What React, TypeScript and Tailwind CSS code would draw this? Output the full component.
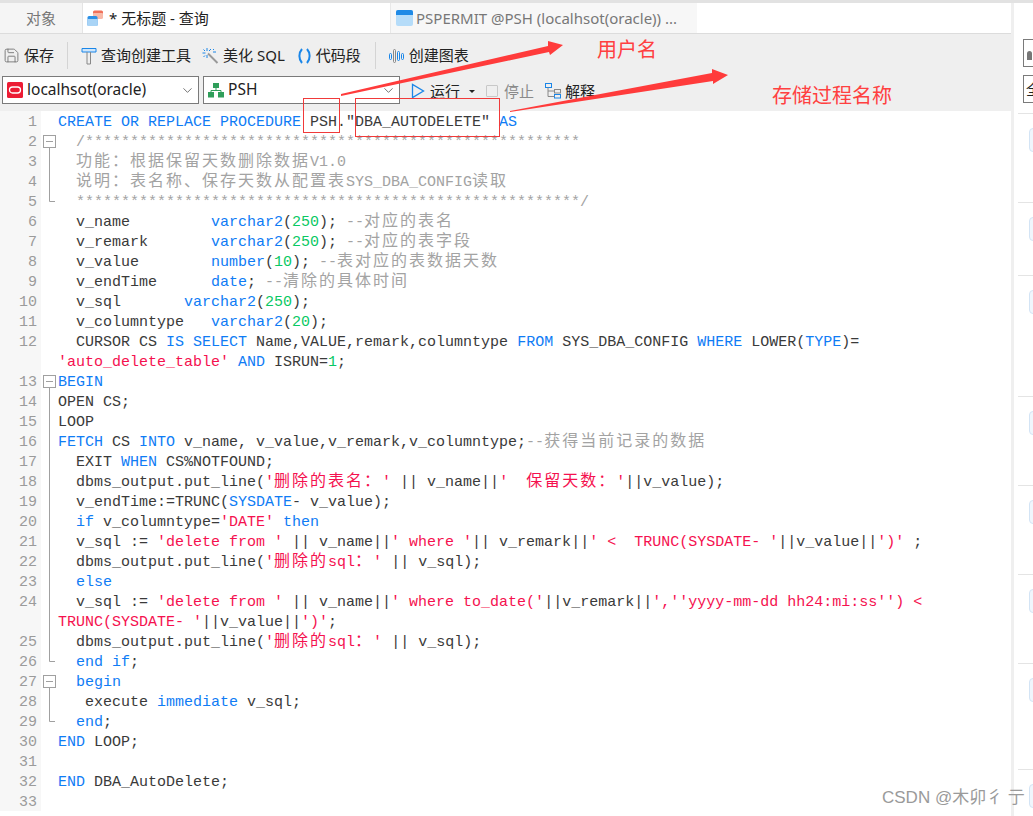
import { Save, ChevronDown } from "lucide-react";

const UI_FONT = `font-['Noto_Sans','Noto_Sans_CJK_SC',sans-serif]`;

const TOKEN_STYLES: Record<string, string> = {
  k: "text-[#0f7cf5]",
  s: "text-[#f5114f]",
  n: "text-[#0ac864]",
  c: "text-[#a3a3a3]",
};

type Fold = "open" | "mid" | "end" | undefined;
type Row = { no?: number; fold?: Fold; code: string };

const ROWS: Row[] = [
  { no: 1, code: `{k:CREATE OR REPLACE PROCEDURE} PSH."DBA_AUTODELETE" {k:AS}` },
  { no: 2, fold: "open", code: `  {c:/*******************************************************}` },
  { no: 3, fold: "mid", code: `  {c:功能：根据保留天数删除数据V1.0}` },
  { no: 4, fold: "mid", code: `  {c:说明：表名称、保存天数从配置表SYS_DBA_CONFIG读取}` },
  { no: 5, fold: "end", code: `  {c:*******************************************************\u002a/}` },
  { no: 6, code: `  v_name         {k:varchar2}({n:250}); {c:--对应的表名}` },
  { no: 7, code: `  v_remark       {k:varchar2}({n:250}); {c:--对应的表字段}` },
  { no: 8, code: `  v_value        {k:number}({n:10}); {c:--表对应的表数据天数}` },
  { no: 9, code: `  v_endTime      {k:date}; {c:--清除的具体时间}` },
  { no: 10, code: `  v_sql       {k:varchar2}({n:250});` },
  { no: 11, code: `  v_columntype   {k:varchar2}({n:20});` },
  { no: 12, code: `  CURSOR CS {k:IS} {k:SELECT} Name,VALUE,remark,columntype {k:FROM} SYS_DBA_CONFIG {k:WHERE} LOWER({k:TYPE})=` },
  { code: `{s:'auto_delete_table'} {k:AND} ISRUN={n:1};` },
  { no: 13, fold: "open", code: `{k:BEGIN}` },
  { no: 14, fold: "mid", code: `OPEN CS;` },
  { no: 15, fold: "mid", code: `LOOP` },
  { no: 16, fold: "mid", code: `{k:FETCH} CS {k:INTO} v_name, v_value,v_remark,v_columntype;{c:--获得当前记录的数据}` },
  { no: 17, fold: "mid", code: `  EXIT {k:WHEN} CS%NOTFOUND;` },
  { no: 18, fold: "mid", code: `  dbms_output.put_line({s:'删除的表名：'} || v_name||{s:'  保留天数：'}||v_value);` },
  { no: 19, fold: "mid", code: `  v_endTime:=TRUNC({k:SYSDATE}- v_value);` },
  { no: 20, fold: "mid", code: `  {k:if} v_columntype={s:'DATE'} {k:then}` },
  { no: 21, fold: "mid", code: `  v_sql := {s:'delete from '} || v_name||{s:' where '}|| v_remark||{s:' <  TRUNC(SYSDATE- '}||v_value||{s:')'} ;` },
  { no: 22, fold: "mid", code: `  dbms_output.put_line({s:'删除的sql：'} || v_sql);` },
  { no: 23, fold: "mid", code: `  {k:else}` },
  { no: 24, fold: "mid", code: `  v_sql := {s:'delete from '} || v_name||{s:' where to_date('}||v_remark||{s:',''yyyy-mm-dd hh24:mi:ss'') <}` },
  { fold: "mid", code: `{s:TRUNC(SYSDATE- '}||v_value||{s:')'};` },
  { no: 25, fold: "mid", code: `  dbms_output.put_line({s:'删除的sql：'} || v_sql);` },
  { no: 26, fold: "end", code: `  {k:end} {k:if};` },
  { no: 27, fold: "open", code: `  {k:begin}` },
  { no: 28, fold: "mid", code: `   execute {k:immediate} v_sql;` },
  { no: 29, fold: "end", code: `  {k:end};` },
  { no: 30, code: `{k:END} LOOP;` },
  { no: 31, code: `` },
  { no: 32, code: `{k:END} DBA_AutoDelete;` },
  { no: 33, code: `` },
];

const SIDE_SECTIONS = ["h-[89px]", "h-[73px]", "h-[121px]", "h-[89px]", "h-[89px]", "h-[89px]", "h-[106px]", "h-[47px]"];

// CJK runs are stretched to two editor cells each
function Cells({ text }: { text: string }) {
  const parts = text.split(/([\u3000-\u9fff\uff00-\uffef]+)/);
  return (
    <>
      {parts.map((part, i) =>
        i % 2 === 1 ? (
          <span key={i} className="font-['Noto_Sans_CJK_SC',sans-serif] text-[16px] leading-[0] tracking-[2px]">
            {part}
          </span>
        ) : (
          <span key={i}>{part}</span>
        ),
      )}
    </>
  );
}

function CodeText({ code }: { code: string }) {
  const parts = code.split(/\{([ksnc]):([^}]*)\}/);
  const out = [];
  for (let i = 0; i < parts.length; i += 3) {
    if (parts[i]) out.push(<Cells key={i} text={parts[i]} />);
    if (parts[i + 1]) {
      out.push(
        <span key={`t${i}`} className={TOKEN_STYLES[parts[i + 1]]}>
          <Cells text={parts[i + 2]} />
        </span>,
      );
    }
  }
  return <>{out}</>;
}

function FoldMark({ fold }: { fold: Fold }) {
  return (
    <svg width="17" height="20" className="shrink-0 bg-white" stroke="#a0a0a0" fill="none">
      {fold === "open" && (
        <>
          <rect x="2.5" y="4.5" width="12" height="12" />
          <path d="M5 10.5h7M8.5 16.5V20" />
        </>
      )}
      {fold === "mid" && <path d="M8.5 0v20" />}
      {fold === "end" && <path d="M8.5 0v10.5H14" />}
    </svg>
  );
}

function Separator() {
  return <div className="w-px h-[27px] bg-[#d4d4d4]" />;
}

function HammerIcon() {
  return (
    <svg width="16" height="18" viewBox="0 0 16 18" fill="none" className="shrink-0">
      <path d="M1 1.5h14v3.5H1z" fill="#cfe6fb" stroke="#1a86e8" />
      <path d="M6 5v12h3.5V5" stroke="#888" />
    </svg>
  );
}

function SparkleIcon() {
  return (
    <svg width="17" height="17" viewBox="0 0 17 17" fill="none" className="shrink-0">
      <path d="M6 6.5l9.5 9.5" stroke="#999" strokeWidth="2" />
      <path d="M5 1v3M5 8v3M0.5 6h3M7 4l2-2M1.5 2.5l1.5 1.5M1.5 10l1.5-1.5M11 5h3M12 2l-1 1" stroke="#1a86e8" />
    </svg>
  );
}

function ParenIcon() {
  return (
    <svg width="15" height="16" viewBox="0 0 15 16" fill="none" stroke="#1a86e8" strokeWidth="2" className="shrink-0">
      <path d="M5 1C1.5 5 1.5 11 5 15" />
      <path d="M10 1c3.500 4 3.500 10 0 14" />
    </svg>
  );
}

function ChartIcon() {
  return (
    <svg width="16" height="16" viewBox="0 0 16 16" fill="none" className="shrink-0">
      <rect x="0.500" y="5.500" width="2" height="6" rx="1" stroke="#1a86e8" />
      <rect x="4.500" y="1.500" width="2" height="13" rx="1" stroke="#888" />
      <rect x="8.500" y="3.500" width="2" height="9" rx="1" stroke="#1a86e8" />
      <rect x="12.500" y="5.500" width="2" height="6" rx="1" stroke="#1a86e8" />
    </svg>
  );
}

function OracleIcon() {
  return (
    <svg width="16" height="16" viewBox="0 0 16 16" className="shrink-0">
      <rect width="16" height="16" rx="1.500" fill="#ec1c34" />
      <rect x="2.500" y="5" width="11" height="6" rx="3" fill="none" stroke="#fff" strokeWidth="1.300" />
    </svg>
  );
}

function SchemaIcon() {
  return (
    <svg width="16" height="15" viewBox="0 0 16 15" className="shrink-0">
      <rect x="5" y="0" width="6" height="5" fill="#2f9e5a" />
      <rect x="0" y="9" width="6" height="5.500" fill="#2f9e5a" />
      <rect x="10" y="9" width="6" height="5.500" fill="#2f9e5a" />
      <path d="M8 5v2.500M3 9V7.500h10V9" stroke="#2f9e5a" fill="none" />
    </svg>
  );
}

function QueryTabIcon() {
  return (
    <svg width="17" height="17" viewBox="0 0 17 17" className="shrink-0">
      <rect x="6" y="0.500" width="10" height="8" rx="1.500" fill="#f0705a" />
      <rect x="6" y="3" width="10" height="5.500" rx="1" fill="#f8b9a8" />
      <rect x="0.500" y="6" width="10" height="10" rx="1.500" fill="#2a8fe6" />
      <rect x="0.500" y="9" width="10" height="7" fill="#a9d4f6" />
    </svg>
  );
}

function TableTabIcon() {
  return (
    <svg width="17" height="16" viewBox="0 0 17 16" className="shrink-0">
      <rect width="17" height="16" rx="2" fill="#b5dcf9" />
      <path d="M0 2a2 2 0 012-2h13a2 2 0 012 2v3H0z" fill="#1f8ae6" />
    </svg>
  );
}

function ExplainIcon() {
  return (
    <svg width="16" height="16" viewBox="0 0 16 16" fill="none" className="shrink-0">
      <rect x="0.500" y="0.500" width="6" height="4" stroke="#1a86e8" />
      <rect x="9.500" y="6.500" width="6" height="3.500" stroke="#888" />
      <rect x="9.500" y="11.500" width="6" height="3.500" stroke="#1a86e8" />
      <path d="M3 4.500V13.500h6.500M3 8h6.500" stroke="#888" />
    </svg>
  );
}

function SelectBox({ icon, label }: { icon: React.ReactNode; label: string }) {
  return (
    <div className="w-[197px] h-[28px] flex items-center gap-[4px] pl-[4px] pr-[3px] bg-white border border-[#7a7a7a]">
      {icon}
      <span className="flex-1 text-[15.5px] leading-none text-[#222]">{label}</span>
      <ChevronDown size={15} strokeWidth={1.300} className="text-[#555]" />
    </div>
  );
}

function Toolbar() {
  return (
    <div className={`bg-[#efefef] h-[77px] ${UI_FONT} text-[15px] text-[#222]`}>
      <div className="h-[38px] pt-[5px] pl-[3px] flex items-center">
        <Save size={17} strokeWidth={1.300} className="text-[#777]" />
        <span className="ml-[4px]">保存</span>
        <div className="ml-[13px]"><Separator /></div>
        <div className="ml-[13px]"><HammerIcon /></div>
        <span className="ml-[4px]">查询创建工具</span>
        <div className="ml-[11px]"><SparkleIcon /></div>
        <span className="ml-[4px]">美化 SQL</span>
        <div className="ml-[12px]"><ParenIcon /></div>
        <span className="ml-[4px]">代码段</span>
        <div className="ml-[14px]"><Separator /></div>
        <div className="ml-[13px]"><ChartIcon /></div>
        <span className="ml-[4px]">创建图表</span>
      </div>
      <div className="h-[39px] pl-[2px] flex items-start pt-[4px]">
        <SelectBox icon={<OracleIcon />} label="localhsot(oracle)" />
        <div className="ml-[4px]">
          <SelectBox icon={<SchemaIcon />} label="PSH" />
        </div>
        <div className="ml-[11px] h-[28px] flex items-center mt-[1px]">
          <svg width="14" height="16" viewBox="0 0 14 16" fill="none" className="shrink-0">
            <path d="M1.500 1.500v13L12.500 8z" stroke="#1a86e8" strokeWidth="1.300" />
          </svg>
          <span className="ml-[5px]">运行</span>
          <span className="ml-[9px] w-0 h-0 border-x-[3px] border-x-transparent border-t-[3px] border-t-[#222]" />
          <span className="ml-[11px] w-[12px] h-[12px] bg-[#efefef] border border-[#c8c8c8] rounded-[1px]" />
          <span className="ml-[6px] text-[#8a8a8a]">停止</span>
          <div className="ml-[11px]"><ExplainIcon /></div>
          <span className="ml-[4px]">解释</span>
        </div>
      </div>
    </div>
  );
}

function Tabs() {
  return (
    <div className={`h-[31px] flex border-b border-[#dcdcdc] bg-white ${UI_FONT} text-[15px]`}>
      <div className="w-[83px] bg-[#f5f5f5] text-[#777] flex items-center justify-center border-r border-[#e4e4e4]">
        对象
      </div>
      <div className="w-[307px] pl-[4px] flex items-center gap-[5px] text-[#222]">
        <QueryTabIcon />
        <span>* 无标题 - 查询</span>
      </div>
      <div className="w-[307px] pl-[5px] bg-[#f7f7f7] border-l border-[#e8e8e8] flex items-center gap-[3px] text-[#777]">
        <TableTabIcon />
        <span className="whitespace-nowrap">PSPERMIT @PSH (localhsot(oracle)) ...</span>
      </div>
    </div>
  );
}

function Editor() {
  return (
    <div className="flex-1 min-h-0 overflow-hidden bg-white font-['Liberation_Mono',monospace] text-[15px] leading-6 whitespace-pre text-[#3a3a3a]">
      {ROWS.map((row, i) => (
        <div key={i} className="flex h-5">
          <div className="w-[41px] shrink-0 pr-[4px] text-right bg-[#f7f7f7] text-[#9b9b9b]">{row.no}</div>
          <FoldMark fold={row.fold} />
          <div>
            <CodeText code={row.code} />
          </div>
        </div>
      ))}
    </div>
  );
}

function SidePanel() {
  return (
    <div className="w-[19px] shrink-0 overflow-hidden bg-white">
      <div className="h-[110px] pt-[36px] pl-[9px] flex flex-col gap-[8px]">
        <div className="w-[30px] h-[28px] shrink-0 border border-[#7a7a7a] flex items-center pl-[3px] pt-[4px]">
          <span className="w-[5px] h-[9px] bg-[#777] rounded-t-[3px]" />
        </div>
        <div className={`w-[30px] h-[28px] shrink-0 border border-[#7a7a7a] flex items-center pl-[2px] text-[15px] text-[#222] ${UI_FONT}`}>
          全
        </div>
      </div>
      {SIDE_SECTIONS.map((h, i) => (
        <div key={i} className={`${h} ml-[4px] border-t border-[#e4e4e4] pt-[14px] pl-[11px]`}>
          <div className="w-[24px] h-[24px] rounded-[4px] border border-[#d3e4f5] bg-[#f0f6fc]" />
        </div>
      ))}
    </div>
  );
}

// Red markup drawn by hand over the screenshot
function Annotations() {
  return (
    <>
      <svg width="1033" height="816" className="absolute inset-0 pointer-events-none">
        <polygon points="341,94 548,46 548,41 563,45 550,55 549,52 341,96" fill="#ff3b3b" />
        <polygon points="510,111 712,73 712,69 728,75 713,84 713,81 510,112" fill="#ff3b3b" />
      </svg>
      <div className="absolute left-[303px] top-[98px] w-[37px] h-[35px] border border-[#f03a3a]" />
      <div className="absolute left-[355px] top-[98px] w-[145px] h-[39px] border border-[#f03a3a]" />
      <div className={`absolute left-[597px] top-[36px] text-[20px] leading-7 text-[#ff4040] ${UI_FONT}`}>用户名</div>
      <div className={`absolute left-[772px] top-[82px] text-[20px] leading-7 text-[#ff4040] ${UI_FONT}`}>存储过程名称</div>
      <div className="absolute left-[882px] top-[786px] text-[17px] leading-6 text-[#9a9a9a] whitespace-pre font-['Liberation_Sans','Noto_Sans_CJK_SC',sans-serif]">
        CSDN @木卯彳 亍
      </div>
    </>
  );
}

export default function App() {
  return (
    <div className="relative w-[1033px] h-[816px] overflow-hidden bg-white flex flex-col">
      <div className="h-[3px] shrink-0 bg-[#e2e2e2]" />
      <div className="flex-1 min-h-0 flex">
        <div className="w-[1011px] shrink-0 flex flex-col">
          <Tabs />
          <Toolbar />
          <Editor />
        </div>
        <div className="w-[3px] shrink-0 bg-[#efefef]" />
        <SidePanel />
      </div>
      <Annotations />
    </div>
  );
}
